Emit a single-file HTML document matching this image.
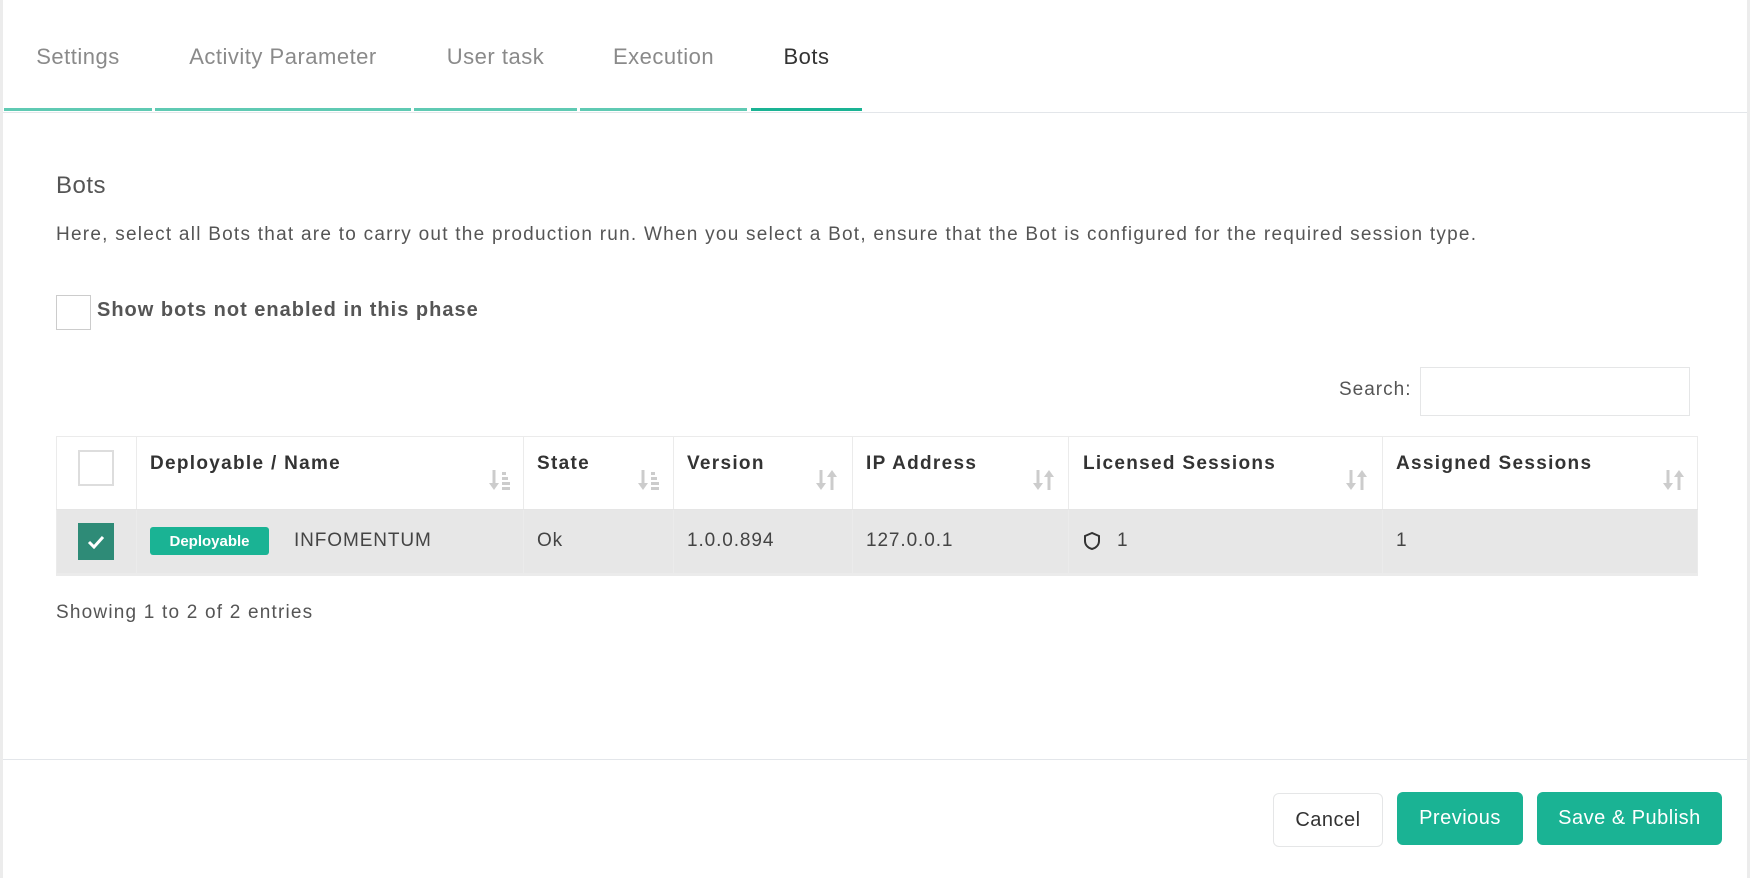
<!DOCTYPE html>
<html><head><meta charset="utf-8"><style>
*{box-sizing:border-box;margin:0;padding:0}
body{width:1750px;height:878px;background:#fff;font-family:"Liberation Sans",sans-serif;color:#555;position:relative;overflow:hidden}
.abs{position:absolute}
.vl{position:absolute;top:0;bottom:0;width:3px;background:#ececec}
.tab{position:absolute;top:44px;font-size:22px;letter-spacing:0.5px;color:#8a8a8a;text-align:center}
.ul{position:absolute;top:108px;height:3px;background:#5fcab3}
.th{position:absolute;top:453px;font-size:19px;letter-spacing:1.3px;font-weight:bold;color:#333}
.td{position:absolute;top:530px;font-size:19px;letter-spacing:0.9px;color:#444}
.sort{position:absolute;top:468px}
.btn{position:absolute;top:793px;height:53px;border-radius:6px;font-size:20px;letter-spacing:0.5px;display:flex;align-items:center;justify-content:center}
</style></head><body>
<div class="vl" style="left:0"></div>
<div class="vl" style="left:1747px"></div>
<div class="tab" style="left:4px;width:148px">Settings</div>
<div class="tab" style="left:155px;width:256px">Activity Parameter</div>
<div class="tab" style="left:414px;width:163px">User task</div>
<div class="tab" style="left:580px;width:167px">Execution</div>
<div class="tab" style="left:751px;width:111px;color:#333">Bots</div>
<div class="ul" style="left:4px;width:148px"></div>
<div class="ul" style="left:155px;width:256px"></div>
<div class="ul" style="left:414px;width:163px"></div>
<div class="ul" style="left:580px;width:167px"></div>
<div class="ul" style="left:751px;width:111px;background:#1ab394"></div>
<div class="abs" style="left:3px;right:3px;top:112px;height:1px;background:#e3e6ea"></div>

<div class="abs" style="left:56px;top:172px;font-size:24px;letter-spacing:0.5px;color:#555">Bots</div>
<div class="abs" style="left:56px;top:224px;font-size:19px;letter-spacing:1.25px;color:#555;white-space:nowrap">Here, select all Bots that are to carry out the production run. When you select a Bot, ensure that the Bot is configured for the required session type.</div>
<div class="abs" style="left:56px;top:295px;width:35px;height:35px;border:1px solid #ccc"></div>
<div class="abs" style="left:97px;top:299px;font-size:20px;letter-spacing:1px;font-weight:bold;color:#555">Show bots not enabled in this phase</div>

<div class="abs" style="left:1339px;top:379px;font-size:19px;letter-spacing:1px;color:#555">Search:</div>
<div class="abs" style="left:1420px;top:367px;width:270px;height:49px;border:1px solid #e5e6e7"></div>

<div class="abs" style="left:56px;top:436px;width:1642px;height:138px;border:1px solid #ebebeb"></div>
<div class="abs" style="left:57px;top:510px;width:1640px;height:63px;background:#e7e7e7"></div>
<div class="abs" style="left:56px;top:574px;width:1642px;height:2px;background:#ebebeb"></div>
<div class="abs" style="left:136px;top:436px;width:1px;height:138px;background:#ebebeb"></div>
<div class="abs" style="left:523px;top:436px;width:1px;height:138px;background:#ebebeb"></div>
<div class="abs" style="left:673px;top:436px;width:1px;height:138px;background:#ebebeb"></div>
<div class="abs" style="left:852px;top:436px;width:1px;height:138px;background:#ebebeb"></div>
<div class="abs" style="left:1068px;top:436px;width:1px;height:138px;background:#ebebeb"></div>
<div class="abs" style="left:1382px;top:436px;width:1px;height:138px;background:#ebebeb"></div>
<div class="abs" style="left:56px;top:509px;width:1642px;height:1px;background:#e5e5e5"></div>

<div class="abs" style="left:78px;top:450px;width:36px;height:36px;border:2px solid #ddd;background:#fff"></div>
<div class="th" style="left:150px">Deployable / Name</div>
<div class="th" style="left:537px">State</div>
<div class="th" style="left:687px">Version</div>
<div class="th" style="left:866px">IP Address</div>
<div class="th" style="left:1083px">Licensed Sessions</div>
<div class="th" style="left:1396px">Assigned Sessions</div>

<svg class="sort" style="left:489px" width="22" height="24" viewBox="0 0 22 24"><path d="M5 2v16" stroke="#ccc" stroke-width="3"/><path d="M0 15l5 7 5-7z" fill="#ccc"/><rect x="13" y="4" width="4" height="3" fill="#ccc"/><rect x="13" y="9" width="6" height="3" fill="#ccc"/><rect x="13" y="14" width="8" height="3" fill="#ccc"/><rect x="13" y="19" width="8" height="3" fill="#ccc"/></svg>
<svg class="sort" style="left:638px" width="22" height="24" viewBox="0 0 22 24"><path d="M5 2v16" stroke="#ccc" stroke-width="3"/><path d="M0 15l5 7 5-7z" fill="#ccc"/><rect x="13" y="4" width="4" height="3" fill="#ccc"/><rect x="13" y="9" width="6" height="3" fill="#ccc"/><rect x="13" y="14" width="8" height="3" fill="#ccc"/><rect x="13" y="19" width="8" height="3" fill="#ccc"/></svg>
<svg class="sort" style="left:816px" width="22" height="24" viewBox="0 0 22 24"><path d="M5 2v16" stroke="#ccc" stroke-width="3"/><path d="M0 15l5 7 5-7z" fill="#ccc"/><path d="M16 22V6" stroke="#ccc" stroke-width="3"/><path d="M11 9l5-7 5 7z" fill="#ccc"/></svg>
<svg class="sort" style="left:1033px" width="22" height="24" viewBox="0 0 22 24"><path d="M5 2v16" stroke="#ccc" stroke-width="3"/><path d="M0 15l5 7 5-7z" fill="#ccc"/><path d="M16 22V6" stroke="#ccc" stroke-width="3"/><path d="M11 9l5-7 5 7z" fill="#ccc"/></svg>
<svg class="sort" style="left:1346px" width="22" height="24" viewBox="0 0 22 24"><path d="M5 2v16" stroke="#ccc" stroke-width="3"/><path d="M0 15l5 7 5-7z" fill="#ccc"/><path d="M16 22V6" stroke="#ccc" stroke-width="3"/><path d="M11 9l5-7 5 7z" fill="#ccc"/></svg>
<svg class="sort" style="left:1663px" width="22" height="24" viewBox="0 0 22 24"><path d="M5 2v16" stroke="#ccc" stroke-width="3"/><path d="M0 15l5 7 5-7z" fill="#ccc"/><path d="M16 22V6" stroke="#ccc" stroke-width="3"/><path d="M11 9l5-7 5 7z" fill="#ccc"/></svg>

<div class="abs" style="left:78px;top:523px;width:36px;height:37px;background:#2e8b77;display:flex;align-items:center;justify-content:center">
<svg width="18" height="14" viewBox="0 0 18 14"><path d="M2 7l5 5 9-10" stroke="#fff" stroke-width="3" fill="none"/></svg></div>
<div class="abs" style="left:150px;top:527px;width:119px;height:28px;background:#1ab394;border-radius:3px;color:#fff;font-size:15px;font-weight:bold;display:flex;align-items:center;justify-content:center">Deployable</div>
<div class="td" style="left:294px">INFOMENTUM</div>
<div class="td" style="left:537px">Ok</div>
<div class="td" style="left:687px">1.0.0.894</div>
<div class="td" style="left:866px">127.0.0.1</div>
<svg class="abs" style="left:1083px;top:531px" width="18" height="20" viewBox="0 0 18 20"><path d="M9 2L2 5v5c0 4 3 7 7 8 4-1 7-4 7-8V5z" stroke="#333" stroke-width="2" fill="none"/></svg>
<div class="td" style="left:1117px">1</div>
<div class="td" style="left:1396px">1</div>

<div class="abs" style="left:56px;top:602px;font-size:19px;letter-spacing:1.2px;color:#555">Showing 1 to 2 of 2 entries</div>

<div class="abs" style="left:3px;right:3px;top:759px;height:1px;background:#e3e6ea"></div>
<div class="btn" style="left:1273px;width:110px;border:1px solid #e5e6e7;color:#333;top:793px;height:54px">Cancel</div>
<div class="btn" style="left:1397px;width:126px;background:#1ab394;color:#fff;top:792px">Previous</div>
<div class="btn" style="left:1537px;width:185px;background:#1ab394;color:#fff;top:792px">Save &amp; Publish</div>
</body></html>
